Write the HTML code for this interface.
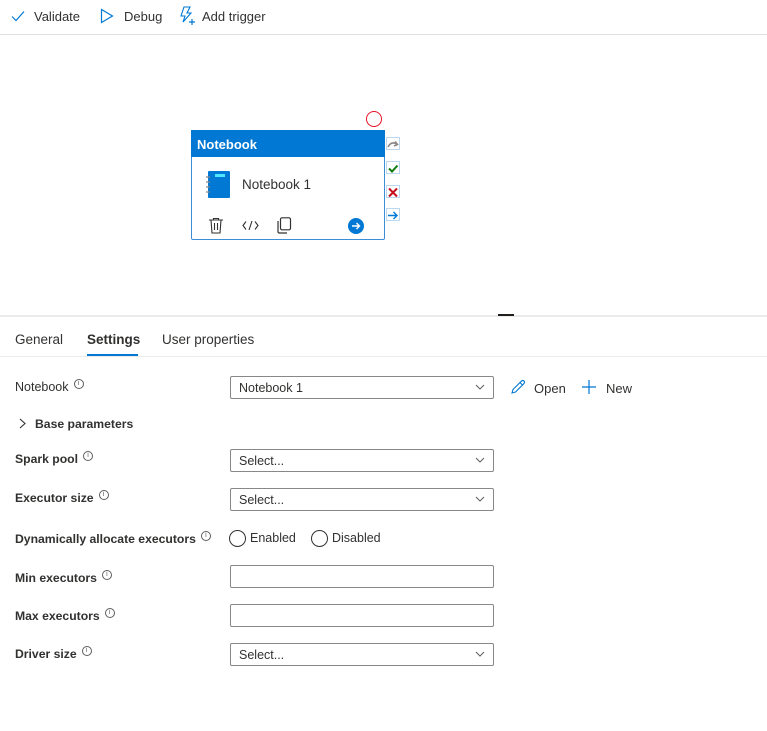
<!DOCTYPE html>
<html><head><meta charset="utf-8"><style>
*{box-sizing:border-box;margin:0;padding:0}
body{width:767px;height:731px;background:#fff;font-family:"Liberation Sans",sans-serif;font-size:13px;color:#323130;position:relative;overflow:hidden}
.a{position:absolute}
.lbl{position:absolute;left:15px;font-weight:600;font-size:12.2px;color:#323130}
.info{display:inline-block;width:10px;height:10px;border:1px solid #605e5c;border-radius:50%;font-size:7px;line-height:8px;text-align:center;font-weight:400;vertical-align:top;margin-left:5px;margin-top:-1px;color:#605e5c}
.inp{position:absolute;left:230px;width:264px;height:23px;border:1px solid #8a8886;border-radius:2px;font-size:12.5px;padding:4px 8px;color:#323130}
.chev{position:absolute;right:8px;top:7px}
.side{position:absolute;left:386px;width:14px;height:13px;border:1px solid #bcd8f0;background:#fff}
</style></head><body>
<svg class="a" style="left:11px;top:10px" width="14" height="12" viewBox="0 0 14 12"><path d="M1 6.5 L5 10.5 L13 1.5" fill="none" stroke="#0078d4" stroke-width="1.2"/></svg>
<div class="a" style="left:34px;top:9px">Validate</div>
<svg class="a" style="left:100px;top:8px" width="14" height="16" viewBox="0 0 14 16"><path d="M1.5 1.5 L12.5 8 L1.5 14.5 Z" fill="none" stroke="#0078d4" stroke-width="1.2"/></svg>
<div class="a" style="left:124px;top:9px">Debug</div>
<svg class="a" style="left:178px;top:6px" width="18" height="19" viewBox="0 0 18 19"><path d="M6 1 H12 L9 7 H13 L5 16 L7 10 H3 Z" fill="none" stroke="#0078d4" stroke-width="1.1"/><path d="M14 13 V19 M11 16 H17" stroke="#0078d4" stroke-width="1.2"/></svg>
<div class="a" style="left:202px;top:9px">Add trigger</div>
<div class="a" style="left:0;top:34px;width:767px;height:1px;background:#e1dfdd"></div>
<div class="a" style="left:366px;top:111px;width:16px;height:16px;border:1.3px solid #e81123;border-radius:50%"></div>
<div class="a" style="left:191px;top:130px;width:194px;height:110px;border:1px solid #3a8fd8;border-radius:2px;background:#fff"></div>
<div class="a" style="left:191px;top:130px;width:194px;height:27px;background:#0078d4;color:#fff;font-weight:700;font-size:13px;padding:7px 6px">Notebook</div>
<svg class="a" style="left:205px;top:171px" width="26" height="27" viewBox="0 0 26 27"><rect x="3" y="0" width="22" height="27" rx="1" fill="#0078d4"/><rect x="10" y="3" width="10" height="3" fill="#50e6ff"/><path d="M1 6h4M1 11h4M1 16h4M1 21h4" stroke="#8a8886" stroke-width="1.2"/></svg>
<div class="a" style="left:242px;top:177px;font-size:13.5px;color:#323130">Notebook 1</div>
<svg class="a" style="left:208px;top:217px" width="16" height="17" viewBox="0 0 16 17"><path d="M1 3H15 M5.5 3V1.5H10.5V3 M3 3L4 16H12L13 3 M6.5 6V13 M9.5 6V13" fill="none" stroke="#323130" stroke-width="1.1"/></svg>
<svg class="a" style="left:242px;top:220px" width="17" height="11" viewBox="0 0 17 11"><path d="M4 1.5 L1 5.5 L4 9.5 M13 1.5 L16 5.5 L13 9.5 M10 1 L7 10" fill="none" stroke="#323130" stroke-width="1.1"/></svg>
<svg class="a" style="left:276px;top:217px" width="16" height="17" viewBox="0 0 16 17"><rect x="4.5" y="0.8" width="10" height="12" rx="1.5" fill="none" stroke="#323130" stroke-width="1.2"/><path d="M2 4 V14.5 Q2 16 3.5 16 H11" fill="none" stroke="#323130" stroke-width="1.2"/></svg>
<svg class="a" style="left:348px;top:218px" width="16" height="16" viewBox="0 0 16 16"><circle cx="8" cy="8" r="8" fill="#0078d4"/><path d="M4 8H11.5 M8.5 5L11.5 8L8.5 11" fill="none" stroke="#fff" stroke-width="1.4"/></svg>
<div class="side" style="top:137px"><svg width="12" height="11" viewBox="0 0 12 11"><path d="M1 8 Q4 2 10 5 M8 2.5 L10.5 5.5 L7 7" fill="none" stroke="#8a8886" stroke-width="1.6"/></svg></div>
<div class="side" style="top:161px"><svg width="12" height="11" viewBox="0 0 12 11"><path d="M2 5.5 L5 8.5 L10.5 2.5" fill="none" stroke="#107c10" stroke-width="2"/></svg></div>
<div class="side" style="top:185px"><svg width="12" height="11" viewBox="0 0 12 11"><path d="M2 1.5 L10 9.5 M10 1.5 L2 9.5" fill="none" stroke="#c50f1f" stroke-width="2"/></svg></div>
<div class="side" style="top:208px"><svg width="12" height="11" viewBox="0 0 12 11"><path d="M1 5.5 H10 M6.5 2 L10 5.5 L6.5 9" fill="none" stroke="#0078d4" stroke-width="1.4"/></svg></div>
<div class="a" style="left:0;top:315px;width:767px;height:2px;background:#edebe9"></div>
<div class="a" style="left:498px;top:314px;width:16px;height:2px;background:#201f1e"></div>
<div class="a" style="left:15px;top:332px;font-size:13.5px">General</div>
<div class="a" style="left:87px;top:332px;font-size:13.5px;font-weight:600">Settings</div>
<div class="a" style="left:87px;top:354px;width:51px;height:2px;background:#0078d4"></div>
<div class="a" style="left:162px;top:332px;font-size:13.5px">User properties</div>
<div class="a" style="left:0;top:356px;width:767px;height:1px;background:#edebe9"></div>
<div class="lbl" style="top:380px;font-weight:400;font-size:12.5px">Notebook<span class="info">i</span></div>
<div class="inp" style="top:376px">Notebook 1<svg class="chev" width="10" height="6" viewBox="0 0 10 6"><path d="M1 1L5 5L9 1" fill="none" stroke="#605e5c"/></svg></div>
<svg class="a" style="left:510px;top:379px" width="16" height="16" viewBox="0 0 16 16"><path d="M2 14 L3 10.5 L11.5 2 Q13 1 14 2 Q15 3 14 4.5 L5.5 13 Z M10 3.5 L12.5 6" fill="none" stroke="#0078d4" stroke-width="1.1"/></svg>
<div class="a" style="left:534px;top:381px">Open</div>
<svg class="a" style="left:582px;top:380px" width="14" height="14" viewBox="0 0 14 14"><path d="M7 0V14M0 7H14" stroke="#0078d4" stroke-width="1.2"/></svg>
<div class="a" style="left:606px;top:381px">New</div>
<svg class="a" style="left:19px;top:418px" width="7" height="11" viewBox="0 0 7 11"><path d="M1 1L6 5.5L1 10" fill="none" stroke="#323130" stroke-width="1.1"/></svg>
<div class="a" style="left:35px;top:417px;font-size:12.2px;font-weight:600">Base parameters</div>
<div class="lbl" style="top:452px">Spark pool<span class="info">i</span></div>
<div class="inp" style="top:449px">Select...<svg class="chev" width="10" height="6" viewBox="0 0 10 6"><path d="M1 1L5 5L9 1" fill="none" stroke="#605e5c"/></svg></div>
<div class="lbl" style="top:491px">Executor size<span class="info">i</span></div>
<div class="inp" style="top:488px">Select...<svg class="chev" width="10" height="6" viewBox="0 0 10 6"><path d="M1 1L5 5L9 1" fill="none" stroke="#605e5c"/></svg></div>
<div class="lbl" style="top:532px">Dynamically allocate executors<span class="info">i</span></div>
<div class="a" style="left:229px;top:530px;width:17px;height:17px;border:1px solid #323130;border-radius:50%"></div>
<div class="a" style="left:250px;top:531px;font-size:12.5px">Enabled</div>
<div class="a" style="left:311px;top:530px;width:17px;height:17px;border:1px solid #323130;border-radius:50%"></div>
<div class="a" style="left:332px;top:531px;font-size:12.5px">Disabled</div>
<div class="lbl" style="top:571px">Min executors<span class="info">i</span></div>
<div class="inp" style="top:565px"></div>
<div class="lbl" style="top:609px">Max executors<span class="info">i</span></div>
<div class="inp" style="top:604px"></div>
<div class="lbl" style="top:647px">Driver size<span class="info">i</span></div>
<div class="inp" style="top:643px">Select...<svg class="chev" width="10" height="6" viewBox="0 0 10 6"><path d="M1 1L5 5L9 1" fill="none" stroke="#605e5c"/></svg></div>
</body></html>
